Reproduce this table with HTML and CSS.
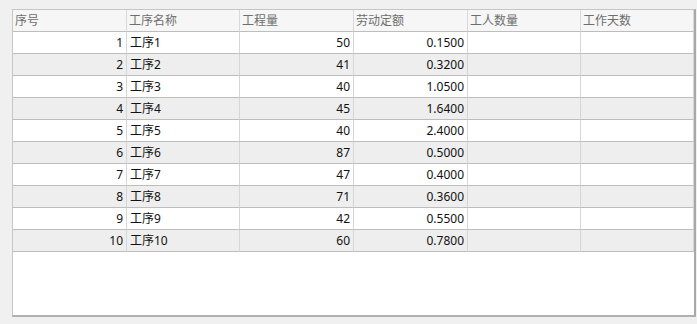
FILE: index.html
```html
<!DOCTYPE html>
<html lang="zh-CN">
<head>
<meta charset="utf-8">
<title>工序</title>
<link rel="stylesheet" href="styles.css">
</head>
<body>
<div class="page">
  <div class="frame">
    <div class="grid">
      <div class="hd">序号</div><div class="hd">工序名称</div><div class="hd">工程量</div><div class="hd">劳动定额</div><div class="hd">工人数量</div><div class="hd">工作天数</div>

      <div class="c num">1</div><div class="c txt">工序1</div><div class="c num">50</div><div class="c num">0.1500</div><div class="c"></div><div class="c"></div>
      <div class="c alt num">2</div><div class="c alt txt">工序2</div><div class="c alt num">41</div><div class="c alt num">0.3200</div><div class="c alt"></div><div class="c alt"></div>
      <div class="c num">3</div><div class="c txt">工序3</div><div class="c num">40</div><div class="c num">1.0500</div><div class="c"></div><div class="c"></div>
      <div class="c alt num">4</div><div class="c alt txt">工序4</div><div class="c alt num">45</div><div class="c alt num">1.6400</div><div class="c alt"></div><div class="c alt"></div>
      <div class="c num">5</div><div class="c txt">工序5</div><div class="c num">40</div><div class="c num">2.4000</div><div class="c"></div><div class="c"></div>
      <div class="c alt num">6</div><div class="c alt txt">工序6</div><div class="c alt num">87</div><div class="c alt num">0.5000</div><div class="c alt"></div><div class="c alt"></div>
      <div class="c num">7</div><div class="c txt">工序7</div><div class="c num">47</div><div class="c num">0.4000</div><div class="c"></div><div class="c"></div>
      <div class="c alt num">8</div><div class="c alt txt">工序8</div><div class="c alt num">71</div><div class="c alt num">0.3600</div><div class="c alt"></div><div class="c alt"></div>
      <div class="c num">9</div><div class="c txt">工序9</div><div class="c num">42</div><div class="c num">0.5500</div><div class="c"></div><div class="c"></div>
      <div class="c alt num">10</div><div class="c alt txt">工序10</div><div class="c alt num">60</div><div class="c alt num">0.7800</div><div class="c alt"></div><div class="c alt"></div>
    </div>
  </div>
</div>
</body>
</html>
```
FILE: styles.css
```css
html, body {
  margin: 0;
  padding: 0;
  background: #f0f0f0;
}
.page {
  width: 697px;
  height: 324px;
  padding: 9px 0 0 12px;
  box-sizing: border-box;
}
.frame {
  width: 684px;
  height: 308px;
  box-sizing: border-box;
  background: #ffffff;
  border-left: 1px solid #c6c6c6;
  border-top: 1px solid #c6c6c6;
  border-right: 2px solid #a8a8a8;
  border-bottom: 2px solid #b0b0b0;
  font-family: "Noto Sans", "Noto Sans CJK SC", sans-serif;
  font-size: 12px;
}
.grid {
  display: grid;
  grid-template-columns: 114px 113px 114px 114px 113px 113px;
  grid-auto-rows: 22px;
}
.hd, .c {
  box-sizing: border-box;
  border-right: 1px solid #d6d6d6;
  border-bottom: 1px solid #bdbdbd;
  line-height: 21px;
  white-space: nowrap;
  overflow: hidden;
}
.hd {
  background: #f6f6f6;
  color: #6e6e6e;
  padding-left: 2px;
  border-right-color: #d9d9d9;
}
.c {
  color: #111111;
  background: #ffffff;
}
.c.alt {
  background: #eeeeee;
}
.num {
  text-align: right;
  padding-right: 3px;
}
.txt {
  padding-left: 3px;
}
```
